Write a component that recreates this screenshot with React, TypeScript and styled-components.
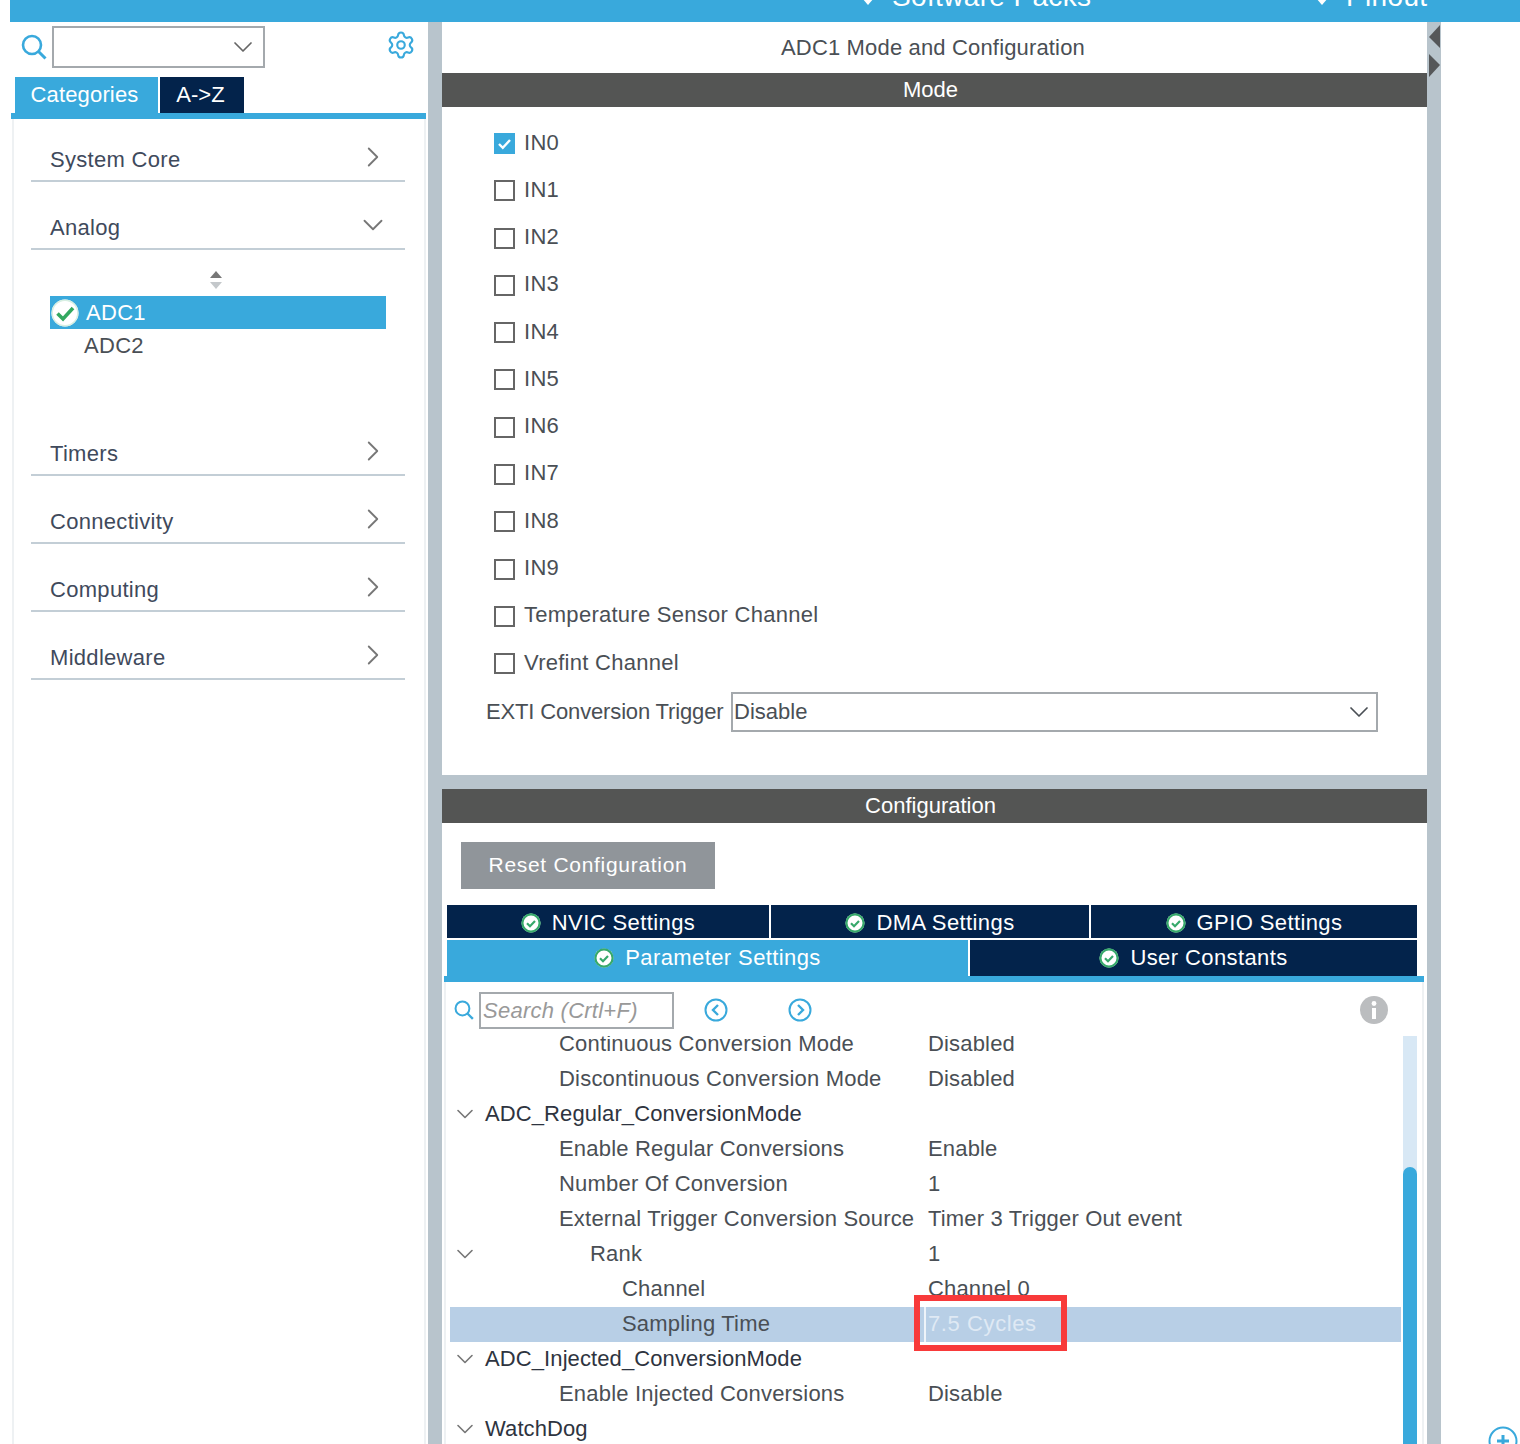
import React from "react";
import styled, { createGlobalStyle } from "styled-components";
import { ChevronDown, ChevronRight, Settings } from "lucide-react";

const Global = createGlobalStyle`
  html, body { margin: 0; padding: 0; background: #fff; }
  * { box-sizing: border-box; }
  body { font-family: "Liberation Sans", Arial, sans-serif; color: #454a50; }
`;

const BLUE = "#39a9dc";
const NAVY = "#03234b";
const GUTTER = "#b8c4cc";

const Page = styled.div`
  width: 1520px; height: 1444px; overflow: hidden;
  padding-left: 10px; display: flex; flex-direction: column; background: #fff;
`;
const TopBar = styled.div`
  height: 22px; flex: none; background: ${BLUE}; overflow: hidden;
  display: flex; color: #fff; font-size: 28px; line-height: 32px; letter-spacing: .35px;
`;
const TopItem = styled.div<{ $w: number }>`
  width: ${p => p.$w}px; flex: none; margin-top: -19px; display: flex; align-items: center; gap: 18px; height: 32px;
`;
const TopCaret = styled.span`
  width: 0; height: 0; border-left: 6px solid transparent; border-right: 6px solid transparent; border-top: 7px solid #fff; margin-top: 9px;
`;
const Body = styled.div`
  flex: 1; display: flex; min-height: 0;
`;
const Left = styled.aside`
  width: 418px; flex: none; display: flex; flex-direction: column; background: #fff;
`;
const SearchRow = styled.div`
  height: 55px; flex: none; display: flex; align-items: center; padding: 0 12px 5px 11px;
`;
const SearchIcon = styled.svg`
  flex: none; display: block;
`;
const SideSelect = styled.div`
  width: 213px; height: 42px; margin-left: 5px; border: 2px solid #a4a9ad; display: flex; align-items: center; justify-content: flex-end; padding-right: 4px; color: #666;
`;
const Gear = styled.div`
  margin-left: auto; color: ${BLUE}; display: flex; margin-top: -4px;
`;
const SideTabs = styled.div`
  display: flex; gap: 2px; padding-left: 5px; height: 36px; flex: none;
`;
const SideTab = styled.div<{ $active?: boolean; $w: number }>`
  width: ${p => p.$w}px; background: ${p => (p.$active ? BLUE : NAVY)}; color: #fff; font-size: 22px;
  display: flex; align-items: center; justify-content: center; letter-spacing: ${p => (p.$active ? ".15px" : "0")};
  padding-right: ${p => (p.$active ? 4 : 3)}px;
`;
const SideRule = styled.div`
  height: 6px; flex: none; margin: 0 2px 0 1px; background: ${BLUE};
`;
const Accordion = styled.div`
  flex: 1; margin: 0 2px; border-left: 2px solid #eef1f3; border-right: 2px solid #eef1f3; padding: 0 19px 0 17px;
`;
const Section = styled.div<{ $first?: boolean }>`
  height: ${p => (p.$first ? 63 : 68)}px; border-bottom: 2px solid #c3ced6; display: flex; align-items: flex-end; justify-content: space-between;
  padding: 0 15px 7px 19px; font-size: 22px; letter-spacing: .3px; line-height: 26px; color: #3f4a5c;
`;
const SectionIcon = styled.span`
  display: flex; color: #777; margin-bottom: -1px;
`;
const AnalogBody = styled.div`
  height: 158px; padding: 20px 0 0 19px;
`;
const SortHandle = styled.div`
  width: 332px; height: 20px; display: flex; justify-content: center; margin-bottom: 6px;
`;
const PeriphRow = styled.div<{ $active?: boolean }>`
  width: 336px; height: 33px; display: flex; align-items: center; gap: 7px; font-size: 22px; letter-spacing: .3px;
  background: ${p => (p.$active ? BLUE : "transparent")}; color: ${p => (p.$active ? "#fff" : "#4a4f55")};
  padding-left: ${p => (p.$active ? "1px" : "34px")};
`;
const VGutter = styled.div`
  width: 14px; flex: none; background: ${GUTTER}; display: flex; flex-direction: column; align-items: center; padding-top: 3px;
`;
const Center = styled.main`
  width: 985px; flex: none; display: flex; flex-direction: column; background: ${GUTTER};
`;
const ModePanel = styled.section`
  height: 753px; flex: none; background: #fff; display: flex; flex-direction: column;
`;
const Title = styled.div`
  height: 51px; flex: none; display: flex; align-items: center; justify-content: center; padding-right: 3px; font-size: 22px; letter-spacing: .16px; color: #4a4f55;
`;
const DarkBar = styled.div`
  height: 34px; flex: none; background: #545554; color: #fff; display: flex; align-items: center; justify-content: center; font-size: 22px; padding-right: 8px;
`;
const Checks = styled.div`
  padding: 12px 0 0 52px; display: flex; flex-direction: column;
`;
const CheckRow = styled.label`
  height: 47.27px; display: flex; align-items: center; gap: 9px; font-size: 22px; color: #4a4f55; letter-spacing: .27px;
`;
const Box = styled.span<{ $on?: boolean }>`
  width: 21px; height: 21px; flex: none; display: flex; align-items: center; justify-content: center; margin-top: 2px;
  background: ${p => (p.$on ? BLUE : "#fff")}; border: 2px solid ${p => (p.$on ? BLUE : "#666")};
`;
const TriggerRow = styled.div`
  display: flex; align-items: center; padding-left: 44px; margin-top: 6px; gap: 8px; font-size: 22px; color: #4a4f55;
`;
const TriggerLabel = styled.span`
  width: 237px; flex: none; white-space: nowrap; letter-spacing: -.15px;
`;
const TriggerSelect = styled.div`
  width: 647px; height: 40px; border: 2px solid #a4a9ad; display: flex; align-items: center; justify-content: space-between; padding: 0 1px 0 1px; color: #4a4f55;
`;
const ConfigPanel = styled.section`
  flex: 1; min-height: 0; margin-top: 14px; background: #fff; display: flex; flex-direction: column;
`;
const ResetWrap = styled.div`
  padding: 19px 0 16px 19px; flex: none;
`;
const ResetButton = styled.div`
  width: 254px; height: 47px; background: #90959a; color: #fff; display: flex; align-items: center; justify-content: center; font-size: 21px; letter-spacing: .7px; padding-bottom: 2px;
`;
const TabRow = styled.div<{ $h: number }>`
  display: flex; gap: 2px; height: ${p => p.$h}px; margin: 0 10px 2px 5px; flex: none;
`;
const ParamTab = styled.div<{ $w: number; $active?: boolean; $pt?: number }>`
  width: ${p => p.$w}px; flex: none; background: ${p => (p.$active ? BLUE : NAVY)}; color: #fff; font-size: 22px; letter-spacing: .4px;
  display: flex; align-items: center; justify-content: center; gap: 11px; padding-top: ${p => p.$pt ?? 0}px;
`;
const TabRule = styled.div`
  height: 6px; flex: none; margin: -2px 3px 0 2px; background: ${BLUE};
`;
const TreeFrame = styled.div`
  flex: 1; min-height: 0; display: flex; flex-direction: column; margin: 0 3px 0 2px; border-left: 2px solid #eef1f3; border-right: 2px solid #eef1f3;
`;
const TreeTools = styled.div`
  height: 54px; flex: none; display: flex; align-items: center; padding: 2px 0 0 8px;
`;
const SearchBox = styled.div`
  width: 195px; height: 37px; margin-left: 5px; border: 2px solid #a4a9ad; color: #999; font-style: italic; font-size: 22px; line-height: 33px; padding-left: 2px; letter-spacing: .25px; white-space: nowrap;
`;
const NavIcons = styled.div`
  display: flex; gap: 60px; margin-left: 30px; color: ${BLUE};
`;
const Info = styled.div`
  margin-left: auto; margin-right: 34px; display: flex;
`;
const TreeBody = styled.div`
  flex: 1; min-height: 0; display: flex; padding-left: 4px; padding-right: 5px; gap: 2px;
`;
const Rows = styled.div`
  flex: 1; min-width: 0; overflow: hidden;
`;
const RowList = styled.div`
  margin-top: -9px;
`;
const Row = styled.div<{ $sel?: boolean }>`
  height: 35px; display: flex; align-items: center; font-size: 22px; position: relative; letter-spacing: .17px; padding-bottom: 2px;
  background: ${p => (p.$sel ? "#b8cfe6" : "transparent")}; color: #4a4f55; white-space: nowrap;
`;
const Toggle = styled.span`
  width: 35px; flex: none; padding-left: 1px; display: flex; color: #777;
`;
const Key = styled.span<{ $indent: number }>`
  width: ${p => p.$indent}px; flex: none;
`;
const Label = styled.span<{ $head?: boolean }>`
  width: 0; flex: 1 1 0; color: ${p => (p.$head ? "#2e3440" : "#4a4f55")}; letter-spacing: ${p => (p.$head ? ".1px" : ".2px")};
`;
const Value = styled.span<{ $sel?: boolean }>`
  position: absolute; left: 478px; color: ${p => (p.$sel ? "#dfe9f4" : "#4a4f55")}; letter-spacing: ${p => (p.$sel ? ".6px" : ".17px")};
`;
const RedBox = styled.span`
  position: absolute; left: 464px; top: -12px; width: 153px; height: 56px; border: 6px solid #f83a3a;
`;
const SelEdge = styled.span`
  position: absolute; left: 474px; top: 0; bottom: 0; width: 2px; background: #eef3f9;
`;
const Track = styled.div`
  width: 14px; flex: none; background: #d8e8f5; display: flex; flex-direction: column; padding-top: 131px;
`;
const Thumb = styled.div`
  flex: 1; background: ${BLUE}; border-radius: 7px 7px 0 0;
`;
const RightPane = styled.aside`
  flex: 1; display: flex; align-items: flex-end; justify-content: flex-end; padding-right: 2px;
`;
const PlusIcon = styled.svg`
  display: block; margin-bottom: -12px;
`;

const Check = () => (
  <svg width="28" height="28" viewBox="0 0 28 28">
    <circle cx="14" cy="14" r="13.5" fill="#fff" />
    <circle cx="14" cy="14" r="12.8" fill="none" stroke="#d7efe2" strokeWidth="1.4" />
    <path d="M6.5 14.5l5.5 5.5L22 9" fill="none" stroke="#33a860" strokeWidth="3.6" />
  </svg>
);
const Mini = () => (
  <svg width="20" height="20" viewBox="0 0 20 20">
    <circle cx="10" cy="10" r="9.5" fill="#fff" />
    <circle cx="10" cy="10" r="8.6" fill="none" stroke="#37a96b" strokeWidth="2.2" />
    <path d="M6 10.2l3 3 5-5.2" fill="none" stroke="#37a96b" strokeWidth="2.2" />
  </svg>
);
const Mag = ({ s }: { s: number }) => (
  <SearchIcon width={s} height={s} viewBox="0 0 26 26" fill="none" stroke={BLUE} strokeWidth="2.6">
    <circle cx="11" cy="11" r="9" />
    <path d="M17.5 17.5L24.5 24.5" strokeWidth="3" />
  </SearchIcon>
);
const Nav = ({ dir }: { dir: "l" | "r" }) => (
  <svg width="24" height="24" viewBox="0 0 24 24" fill="none" stroke={BLUE} strokeWidth="2">
    <circle cx="12" cy="12" r="10.5" />
    <path d={dir === "l" ? "M14 7l-5 5 5 5" : "M10 7l5 5-5 5"} strokeWidth="2.4" />
  </svg>
);

const channels = ["IN0", "IN1", "IN2", "IN3", "IN4", "IN5", "IN6", "IN7", "IN8", "IN9", "Temperature Sensor Channel", "Vrefint Channel"];

type RowData = { label: string; indent: number; value?: string; open?: boolean; head?: boolean; sel?: boolean };
const rows: RowData[] = [
  { label: "Continuous Conversion Mode", indent: 107, value: "Disabled" },
  { label: "Discontinuous Conversion Mode", indent: 107, value: "Disabled" },
  { label: "ADC_Regular_ConversionMode", indent: 33, open: true, head: true },
  { label: "Enable Regular Conversions", indent: 107, value: "Enable" },
  { label: "Number Of Conversion", indent: 107, value: "1" },
  { label: "External Trigger Conversion Source", indent: 107, value: "Timer 3 Trigger Out event" },
  { label: "Rank", indent: 138, value: "1", open: true },
  { label: "Channel", indent: 170, value: "Channel 0" },
  { label: "Sampling Time", indent: 170, value: "7.5 Cycles", sel: true },
  { label: "ADC_Injected_ConversionMode", indent: 33, open: true, head: true },
  { label: "Enable Injected Conversions", indent: 107, value: "Disable" },
  { label: "WatchDog", indent: 33, open: true, head: true },
];

const SideSection = ({ label, open, first }: { label: string; open?: boolean; first?: boolean }) => (
  <Section $first={first}>
    {label}
    <SectionIcon>
      {open ? <ChevronDown size={34} strokeWidth={1.3} /> : <ChevronRight size={34} strokeWidth={1.3} />}
    </SectionIcon>
  </Section>
);

export default function App() {
  return (
    <Page>
      <Global />
      <TopBar>
        <TopItem $w={852} />
        <TopItem $w={454}><TopCaret />Software Packs</TopItem>
        <TopItem $w={200}><TopCaret />Pinout</TopItem>
      </TopBar>
      <Body>
        <Left>
          <SearchRow>
            <Mag s={26} />
            <SideSelect><ChevronDown size={32} strokeWidth={1.3} /></SideSelect>
            <Gear><Settings size={30} strokeWidth={1.7} /></Gear>
          </SearchRow>
          <SideTabs>
            <SideTab $active $w={143}>Categories</SideTab>
            <SideTab $w={84}>A-&gt;Z</SideTab>
          </SideTabs>
          <SideRule />
          <Accordion>
            <SideSection label="System Core" first />
            <SideSection label="Analog" open />
            <AnalogBody>
              <SortHandle>
                <svg width="14" height="20" viewBox="0 0 14 20">
                  <path d="M7 1l6 7H1z" fill="#777" />
                  <path d="M7 19l6-7H1z" fill="#c4c8cb" />
                </svg>
              </SortHandle>
              <PeriphRow $active><Check />ADC1</PeriphRow>
              <PeriphRow>ADC2</PeriphRow>
            </AnalogBody>
            <SideSection label="Timers" />
            <SideSection label="Connectivity" />
            <SideSection label="Computing" />
            <SideSection label="Middleware" />
          </Accordion>
        </Left>
        <VGutter />
        <Center>
          <ModePanel>
            <Title>ADC1 Mode and Configuration</Title>
            <DarkBar>Mode</DarkBar>
            <Checks>
              {channels.map((c, i) => (
                <CheckRow key={c}>
                  <Box $on={i === 0}>
                    {i === 0 && (
                      <svg width="15" height="15" viewBox="0 0 15 15">
                        <path d="M2 8l3.8 3.8L13 4" fill="none" stroke="#fff" strokeWidth="2.4" />
                      </svg>
                    )}
                  </Box>
                  {c}
                </CheckRow>
              ))}
            </Checks>
            <TriggerRow>
              <TriggerLabel>EXTI Conversion Trigger</TriggerLabel>
              <TriggerSelect>Disable<ChevronDown size={32} strokeWidth={1.3} /></TriggerSelect>
            </TriggerRow>
          </ModePanel>
          <ConfigPanel>
            <DarkBar>Configuration</DarkBar>
            <ResetWrap><ResetButton>Reset Configuration</ResetButton></ResetWrap>
            <TabRow $h={33}>
              <ParamTab $w={322} $pt={3}><Mini />NVIC Settings</ParamTab>
              <ParamTab $w={318} $pt={3}><Mini />DMA Settings</ParamTab>
              <ParamTab $w={326} $pt={3}><Mini />GPIO Settings</ParamTab>
            </TabRow>
            <TabRow $h={36}>
              <ParamTab $w={521} $active><Mini />Parameter Settings</ParamTab>
              <ParamTab $w={447}><Mini />User Constants</ParamTab>
            </TabRow>
            <TabRule />
            <TreeFrame>
              <TreeTools>
                <Mag s={20} />
                <SearchBox>Search (Crtl+F)</SearchBox>
                <NavIcons><Nav dir="l" /><Nav dir="r" /></NavIcons>
                <Info>
                  <svg width="28" height="28" viewBox="0 0 28 28">
                    <circle cx="14" cy="14" r="14" fill="#bbbdbf" />
                    <rect x="12" y="12" width="4" height="11" fill="#fff" />
                    <circle cx="14" cy="7.5" r="2.4" fill="#fff" />
                  </svg>
                </Info>
              </TreeTools>
              <TreeBody>
                <Rows>
                  <RowList>
                    {rows.map(r => (
                      <Row key={r.label} $sel={r.sel}>
                        {r.open
                          ? <><Toggle><ChevronDown size={28} strokeWidth={1.4} /></Toggle><Key $indent={r.indent - 33} /></>
                          : <Key $indent={r.indent + 2} />}
                        <Label $head={r.head}>{r.label}</Label>
                        {r.sel && <SelEdge />}
                        {r.value && <Value $sel={r.sel}>{r.value}</Value>}
                        {r.sel && <RedBox />}
                      </Row>
                    ))}
                  </RowList>
                </Rows>
                <Track><Thumb /></Track>
              </TreeBody>
            </TreeFrame>
          </ConfigPanel>
        </Center>
        <VGutter>
          <svg width="14" height="52" viewBox="0 0 14 52">
            <path d="M2 12L13 0V23z" fill="#555759" />
            <path d="M2 29L13 40 2 52z" fill="#555759" />
          </svg>
        </VGutter>
        <RightPane>
          <PlusIcon width="30" height="30" viewBox="0 0 30 30" fill="none" stroke={BLUE} strokeWidth="2">
            <circle cx="15" cy="15" r="13.5" />
            <path d="M15 9v12M9 15h12" strokeWidth="3" />
          </PlusIcon>
        </RightPane>
      </Body>
    </Page>
  );
}
